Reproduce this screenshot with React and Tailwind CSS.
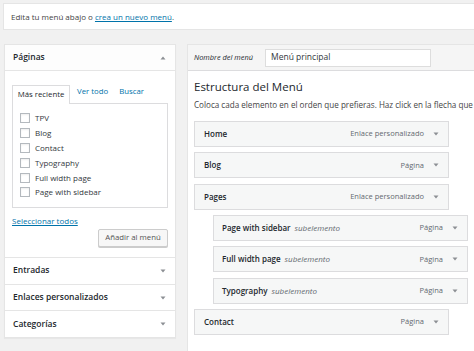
const Down = () => (
  <svg width="6" height="4" viewBox="0 0 6 4" className="shrink-0">
    <path d="M0.5 0.5 L5.5 0.5 L3 3.5 Z" fill="#8c8f94" />
  </svg>
);
const Up = () => (
  <svg width="6" height="4" viewBox="0 0 6 4" className="shrink-0">
    <path d="M0.5 3.5 L5.5 3.5 L3 0.5 Z" fill="#8c8f94" />
  </svg>
);

const pages = ["TPV", "Blog", "Contact", "Typography", "Full width page", "Page with sidebar"];

const items = [
  { t: "Home", type: "Enlace personalizado" },
  { t: "Blog", type: "Página" },
  { t: "Pages", type: "Enlace personalizado" },
  { t: "Page with sidebar", type: "Página", sub: true },
  { t: "Full width page", type: "Página", sub: true },
  { t: "Typography", type: "Página", sub: true },
  { t: "Contact", type: "Página" },
];

function Section({ title }) {
  return (
    <div className="h-[26.7px] border-t border-[#e5e5e5] flex items-center justify-between pl-[8px] pr-[9px]">
      <span className="text-[8.5px] font-semibold text-[#23282d] whitespace-nowrap">{title}</span>
      <Down />
    </div>
  );
}

export default function App() {
  return (
    <div className="w-[474px] h-[351px] overflow-hidden bg-[#f1f1f1] font-['Open_Sans',sans-serif] text-[#444]">
      <div className="ml-[3px] mt-[3px] h-[27px] bg-white border border-[#e5e5e5] border-r-0 flex items-center pl-[7px] text-[8px] text-[#444]">
        <span>
          Edita tu menú abajo o <span className="text-[#0073aa] underline">crea un nuevo menú</span>.
        </span>
      </div>
      <div className="flex items-start mt-[14px]">
        {/* Left panel */}
        <div className="ml-[4px] w-[172px] shrink-0 bg-white border border-[#e5e5e5] shadow-[0_1px_1px_rgba(0,0,0,0.04)]">
          <div className="h-[26px] border-b border-[#e5e5e5] flex items-center justify-between pl-[8px] pr-[9px] bg-[#fdfdfd]">
            <span className="text-[8.5px] font-semibold text-[#23282d]">Páginas</span>
            <Up />
          </div>
          <div className="px-[7px] pt-[13px] pb-[10px]">
            <div className="flex items-end h-[19px] text-[7.8px] whitespace-nowrap">
              <div className="h-[19px] w-[58px] flex items-center justify-center border border-b-0 border-[#dcdcde] bg-white relative top-[1px] text-[#23282d]">
                Más reciente
              </div>
              <span className="ml-[7px] mb-[5px] text-[#0073aa]">Ver todo</span>
              <span className="ml-[11px] mb-[5px] text-[#0073aa]">Buscar</span>
            </div>
            <div className="border border-[#dcdcde] h-[105px] pt-[7px] pl-[7px] bg-white">
              {pages.map((p) => (
                <div key={p} className="h-[14.8px] flex items-center gap-[5px] text-[8px] text-[#32373c] whitespace-nowrap">
                  <span className="w-[10px] h-[10px] shrink-0 border border-[#b4b9be] bg-white shadow-[inset_0_1px_2px_rgba(0,0,0,0.07)]" />
                  <span>{p}</span>
                </div>
              ))}
            </div>
            <div className="mt-[8px] h-[10px] flex items-center text-[8px] text-[#0073aa] underline whitespace-nowrap">Seleccionar todos</div>
            <div className="flex justify-end mt-[3px]">
              <div className="h-[18px] w-[70px] border border-[#ccc] bg-[#f7f7f7] rounded-[2px] flex items-center justify-center text-[7.8px] text-[#555] shadow-[0_1px_0_#ccc] whitespace-nowrap">
                Añadir al menú
              </div>
            </div>
          </div>
          <Section title="Entradas" />
          <Section title="Enlaces personalizados" />
          <Section title="Categorías" />
        </div>

        {/* Right panel */}
        <div className="ml-[11px] flex-1 min-w-0 overflow-hidden bg-white border border-[#e5e5e5] border-r-0 h-[320px]">
          <div className="h-[26px] bg-[#f5f5f5] border-b border-[#dcdcde] flex items-center pl-[6px]">
            <span className="italic text-[7.4px] text-[#23282d] w-[71px] shrink-0 whitespace-nowrap">Nombre del menú</span>
            <div className="w-[166px] shrink-0 h-[18px] bg-white border border-[#ddd] flex items-center pl-[5px] text-[8.5px] text-[#32373c]">
              Menú principal
            </div>
          </div>
          <div className="pl-[6px]">
            <div className="mt-[9px] h-[14px] flex items-center text-[11.5px] text-[#23282d] whitespace-nowrap">Estructura del Menú</div>
            <div className="mt-[6px] h-[10px] flex items-center text-[8.1px] text-[#444] whitespace-nowrap">
              Coloca cada elemento en el orden que prefieras. Haz click en la flecha que
            </div>
            <div className="mt-[11px] flex flex-col gap-[5.33px]">
              {items.map((it) => (
                <div
                  key={it.t}
                  className={
                    "h-[26px] w-[255px] shrink-0 bg-[#f6f7f7] border border-[#dcdcde] flex items-center justify-between whitespace-nowrap " +
                    (it.sub ? "ml-[19px] pl-[8px] pr-[9px]" : "pl-[9px] pr-[9px]")
                  }
                >
                  <span className="text-[8px] font-semibold text-[#23282d]">
                    {it.t}
                    {it.sub && <span className="ml-[4px] italic font-normal text-[#646970] text-[8px]">subelemento</span>}
                  </span>
                  <span className="flex items-center gap-[9px] text-[7.5px] text-[#646970]">
                    {it.type}
                    <Down />
                  </span>
                </div>
              ))}
            </div>
          </div>
        </div>
      </div>
    </div>
  );
}
